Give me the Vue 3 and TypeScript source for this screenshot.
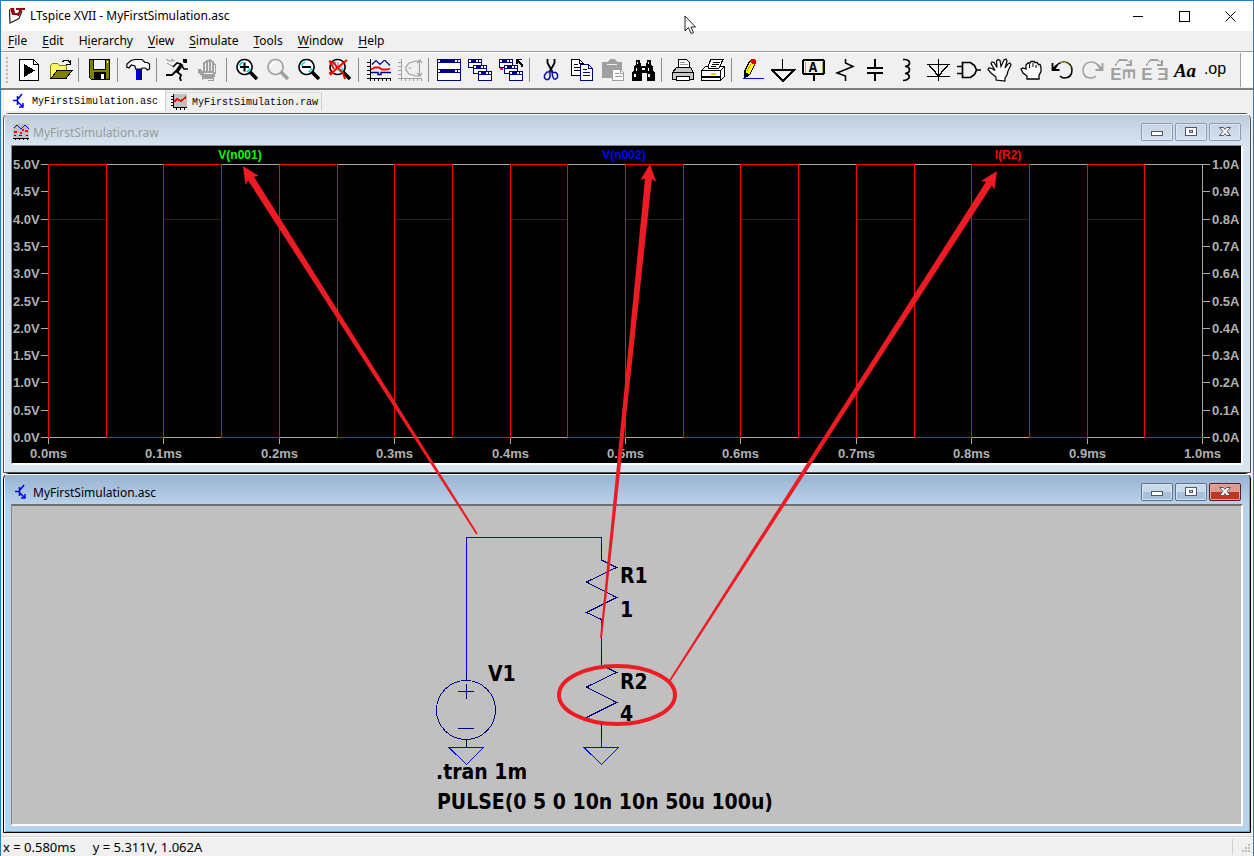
<script setup lang="ts">
interface Shape { d: string; f?: string; s?: string; w?: number }
interface Glyph { t: string; x: number; y: number; size: number; kind: string; color?: string; turn?: string }
interface Tool { name: string; shapes: Shape[]; glyphs?: Glyph[]; soft?: boolean }

const K = '#000'
const G = '#a0a0a0'
const N = '#000080'
const R = '#f00'
const W = '#fff'

const lens = (c: string): Shape[] => [
  { d: 'M15 14L22 21', s: c, w: 3.5 },
  { d: 'M9.5 1.5a7.5 7.5 0 1 0 .1 0z', f: c === K ? W : '#f0f0f0', s: c, w: 1.6 },
]
const glint: Shape = { d: 'M4.5 8C5 6 6 5 8 4M15 10c-.5 2-1.500 3-3.500 4', s: '#00e0e8', w: 1.6 }
const axes = (c: string): Shape[] => [
  { d: 'M3.5 1V21M3 20.5H24', s: c },
  { d: 'M0 4.5H3M0 8.5H3M0 12.5H3M0 16.5H3M0 20.5H3M3.5 21v2M7.5 21v2M11.5 21v2M15.5 21v2M19.5 21v2M23.5 21v2', s: c },
]
const pane = (x: number, y: number, w: number, h: number): Shape[] => [
  { d: `M${x} ${y}h${w}v${h}h-${w}z`, f: N },
  { d: `M${x + 1} ${y + 4}h${w - 2}v${h - 5}h-${w - 2}z`, f: W },
  { d: `M${x + 1} ${y + 1}h2v2h-2zM${x + w - 6} ${y + 1}h2v2h-2zM${x + w - 3} ${y + 1}h2v2h-2z`, f: W },
]
const cascade = [...pane(0, 1, 14, 9), ...pane(5, 7, 14, 9), ...pane(10, 13, 14, 10)]

const groups: Tool[][] = [
  [
    { name: 'Run', shapes: [
      { d: 'M2.5 1.5h14l5 5v16h-19z', f: W, s: K },
      { d: 'M16.5 1.5v5h5', s: K },
      { d: 'M7 6L18 12.5L7 19z', f: K },
    ] },
    { name: 'Open', shapes: [
      { d: 'M2.5 20V7.5l2-2h5l2 2h7v5h-9l-6 8z', f: '#ffff60', s: '#808000' },
      { d: 'M3 20.5l6-8h15l-6 8z', f: '#808000', s: K },
      { d: 'M14 3.5h1l1-1h4l2 2v2M18 6.5h5M22.5 2v5', s: K },
    ] },
  ],
  [{ name: 'Save', shapes: [
    { d: 'M2.5 1.5h20v20h-18l-2-2z', f: '#808000', s: K },
    { d: 'M6.5 1.5h12v10h-12z', f: '#f0f0f0', s: K },
    { d: 'M7 14h12v7H7z', f: K },
    { d: 'M14 16h3v5h-3z', f: W },
    { d: 'M20 3h1v2h-1z', f: W },
  ] }],
  [{ name: 'Control Panel', soft: true, shapes: [
    { d: 'M10 9h5v13h-5z', f: '#0000e0' },
    { d: 'M14 9h2v13h-2z', f: N },
    { d: 'M.7 9L1 6l4-3.500 4-1h7l3 3h2.500l2 1.500v5l-2 1-2-2h-3l-1 1H9.500L9 8 5.500 7 4 8.500 3 10z', f: '#fafafa', s: K, w: 1.2 },
  ] }],
  [
    { name: 'Simulate', soft: true, shapes: [
      { d: 'M1 1l3 2h4M2 5l3 2 3 1M6 1l4 2', s: '#909090' },
      { d: 'M18 1h4v4h-3l-1-1z', f: K },
      { d: 'M17 6L11.5 14', s: K, w: 3.5 },
      { d: 'M16 6l-4-1-4 4M17 8l2 3h4', s: K, w: 1.6 },
      { d: 'M11 13l-4 4H1M11 13l5 4-1 3 1 3', s: K, w: 1.8 },
    ] },
    { name: 'Halt', shapes: [
      { d: 'M6 22v-3l-4-5v-3h2l3 3V4h2l1-2h2l1-1h2l1 2h2l1 3h1v9l-2 5v3z', f: G },
      { d: 'M9.5 5v8M12.5 4v9M15.5 4v9M18.5 7v7M8 15h9M7 21h10', s: '#f0f0f0' },
    ] },
  ],
  [
    { name: 'Zoom in', soft: true, shapes: [...lens(K), glint, { d: 'M5 9h9M9.5 4.5v9', s: K, w: 2 }] },
    { name: 'Pan', soft: true, shapes: [...lens(G), { d: 'M5 9c0-2 1-4 4-4.500', s: W, w: 2 }] },
    { name: 'Zoom back', soft: true, shapes: [...lens(K), glint, { d: 'M5 9h9', s: K, w: 2 }] },
    { name: 'Zoom full extents', soft: true, shapes: [...lens(K), glint, { d: 'M7 9h7M10 4v9', s: '#808080' }, { d: 'M1 3l5 2 3 4 6 6 2 6M19 2l-5 4-6 5-6 6M1 15h5M2 4l4 7', s: R, w: 2 }] },
  ],
  [
    { name: 'Autorange', soft: true, shapes: [...axes(K),
      { d: 'M5 6.500l4-4 4 4 4-4h1l5 5', s: N, w: 1.2 },
      { d: 'M4 11.500l4-2h4l3 2h5l3-1', s: R, w: 1.8 },
      { d: 'M4 14.500h7v2h3v-2h10', s: N, w: 1.5 },
    ] },
    { name: 'FFT', soft: true, shapes: [...axes(G), { d: 'M21.5 2V18M22 3h-4l-7 2-3 4v3l3 4 7 2h4M19 5l3-3 2 3M19 15l3 3 2-3M10.500 10h3', s: G, w: 1.2 }] },
  ],
  [
    { name: 'Tile windows', shapes: [...pane(0, 1, 24, 11), ...pane(0, 11, 24, 12)] },
    { name: 'Cascade windows', shapes: cascade },
    { name: 'Close all windows', shapes: [...cascade, { d: 'M15 0h9v8h-4V5h-5z', f: '#f0f0f0' }, { d: 'M18 6V1.5h5M18 2l5 5v2', s: K, w: 1.5 }, { d: 'M1 10h3v2H1z', f: '#e000a0' }] },
  ],
  [
    { name: 'Cut', soft: true, shapes: [
      { d: 'M9.500 1v4l5 9M16.500 1v4l-5 9', s: K, w: 1.8 },
      { d: 'M12 14H9l-2.500 3v3L8 21.500h2.500L12 19zM14 13.500l1 1h3l1.500 2v3l-1.500 1.500h-2L14.500 18z', s: '#1010a0', w: 1.5 },
    ] },
    { name: 'Copy', shapes: [
      { d: 'M2.5 1.5h8l4 4v12h-12z', f: W, s: K },
      { d: 'M10.5 1.5v4h4M5 6.5h4M5 9.5h6M5 12.5h6', s: K },
      { d: 'M11.5 6.5h8l4 4v12h-12z', f: W, s: N },
      { d: 'M19.5 6.5v4h4M14 11.5h4M14 14.5h7M14 17.5h7', s: N },
    ] },
    { name: 'Paste', shapes: [
      { d: 'M2 4h5l3-3h4l3 3h5v16H2z', f: G },
      { d: 'M7 6h10', s: '#f0f0f0' },
      { d: 'M12.5 11.5h8l3 3v8h-11z', f: W, s: G },
      { d: 'M15 15.5h4M15 18.5h7M20.5 12v3h3', s: G },
    ] },
    { name: 'Find', shapes: [
      { d: 'M5 2h4v3h1v3h5V5h1V2h4v4l2 3v3l2 3v8h-8v-8h-5v8H1v-8l2-3V9l2-3z', f: K },
      { d: 'M6 4h1v2H6zM17 4h1v2h-1zM5 10h1v3H5zM17 10h1v3h-1zM3 16h2v3H3zM17 16h2v3h-2zM11 10h3v2h-3z', f: W },
    ] },
  ],
  [
    { name: 'Print setup', shapes: [
      { d: 'M8.5 9V1.5h8l3 3V9z', f: W, s: K },
      { d: 'M10 4.5h5M10 6.5h8', s: '#999' },
      { d: 'M6.5 9.5h14l3 5v7h-21v-7z', f: '#c8c8c8', s: K },
      { d: 'M3 14.5h20M6 18.5h13v4H6z', f: W, s: K },
    ] },
    { name: 'Print', shapes: [
      { d: 'M6 10L10 1.5h12L18 10z', f: W, s: K },
      { d: 'M12 4.5h7M11 6.5h7M10 8.5h5', s: K },
      { d: 'M.5 12.5l4-4h3v2h10l2-2h4v10l-4 4H.5z', f: W, s: K, w: 1.3 },
      { d: 'M.5 12.5h19v10M19.5 12.5l4-4M1 19h18', s: K, w: 1.3 },
      { d: 'M10 15h5v2h-5z', f: '#f0d000' },
    ] },
  ],
  [
    { name: 'Draw wire', shapes: [
      { d: 'M3 20.5H24', s: '#00f', w: 1.5 },
      { d: 'M5 12L10 3l5 3-5 10-4 3z', f: '#ffff00', s: K, w: 1.3 },
      { d: 'M10 2l2-1h3l1 2v2l-1 2-5-3z', f: '#e00000' },
      { d: 'M4 13l5 3-5 4z', f: K },
      { d: 'M7 13L11 6', s: '#d0a000' },
    ] },
    { name: 'Ground', shapes: [{ d: 'M11.5 1V12M0 12H23L12 23L1 12', s: K, w: 1.8 }] },
    { name: 'Label net', shapes: [
      { d: 'M2 2h19l1 1v12l-1 1H2l-1-1V3z', f: '#f0f0f0', s: K, w: 2 },
      { d: 'M3.5 4v11M20.5 4v11', s: '#b8b020' },
      { d: 'M11.5 16v7', s: K, w: 2 },
    ], glyphs: [{ t: 'A', x: 11, y: 14, size: 14, kind: 'mono' }] },
    { name: 'Resistor', soft: true, shapes: [{ d: 'M12.5 1v4L20 8.5 4 15l8.5 3v5', s: K, w: 1.5 }] },
    { name: 'Capacitor', shapes: [{ d: 'M11 1v9M11 16v7', s: K, w: 2 }, { d: 'M3 10h16M3 15h16', s: K, w: 2 }] },
    { name: 'Inductor', soft: true, shapes: [{ d: 'M8 1.5h2C16 2 16 8 10 8.5C16 8.5 16 15 10 15.5C16 15.5 16 22 8 22.5', s: K, w: 1.7 }] },
    { name: 'Diode', shapes: [{ d: 'M12.5 1V23M1 6.5H24M1 18.5H24M3 7l9.5 11L22 7', s: K, w: 1.4 }] },
    { name: 'Component', soft: true, shapes: [{ d: 'M5.5 4.5h8l4 3 2 4.500-2 4.500-4 3h-8zM0 8.500h5M0 15.500h5M19 12h5', s: K, w: 1.7 }] },
    { name: 'Move', soft: true, shapes: [
      { d: 'M8 22v-3l-5-4-3-3.500L1 10l3 .5 3 2L3 5.500 4 4l2 .5 3 5L8.500 3 10 1.500l2 1 1 6L16 2l2-1 1 2-2 7 3-4 2-1 1 2-3 6-1 4-2 3v3z', f: W, s: K, w: 1.2 },
    ] },
    { name: 'Drag', soft: true, shapes: [
      { d: 'M8 21v-3l-4-3-2-4 2-1 3 1V7l2-2h2l1-1.500h3l1 1h2l1.500 2h1.500l1 3v4l-2 4v3.500z', f: W, s: K, w: 1.3 },
      { d: 'M10.500 6v4M14 5v4M17 7v3', s: K },
    ] },
    { name: 'Undo', soft: true, shapes: [
      { d: 'M5 11C7 5 11 4 14 4c5 0 8 4 8 8 0 5-3 8-8 8-2 0-3-1-4-2', s: K, w: 1.5 },
      { d: 'M10 5c5-2 10 1 11 5', s: '#c8c020' },
      { d: 'M2.500 5v7h7M3 11l4-4', s: K, w: 1.8 },
    ] },
    { name: 'Redo', soft: true, shapes: [
      { d: 'M19 11C17 5 13 4 10 4c-5 0-8 4-8 8 0 5 3 8 8 8 2 0 4-1 5-2', s: G, w: 1.5 },
      { d: 'M21.5 5v7h-7M21 11l-4-4', s: G, w: 1.8 },
    ] },
    { name: 'Rotate', shapes: [{ d: 'M3 8l4-6h8l4 4M19 2v5h-5', s: G, w: 1.2 }], glyphs: [
      { t: 'E', x: 4, y: 22, size: 17, kind: 'heavy', color: G },
      { t: 'E', x: 17, y: 22, size: 17, kind: 'heavy', color: G, turn: 'rotate(90 17 16)' },
    ] },
    { name: 'Mirror', shapes: [{ d: 'M3 8l4-6h8l4 4M19 2v5h-5', s: G, w: 1.2 }], glyphs: [
      { t: 'E', x: 4, y: 22, size: 17, kind: 'heavy', color: G },
      { t: 'Ǝ', x: 20, y: 22, size: 17, kind: 'heavy', color: G },
    ] },
    { name: 'Text', shapes: [], glyphs: [{ t: 'Aa', x: 11, y: 19, size: 19, kind: 'script' }] },
    { name: 'SPICE directive', shapes: [], glyphs: [{ t: '.op', x: 10, y: 16, size: 16, kind: 'plain' }] },
  ],
]

const menus = ['&File', '&Edit', 'H&ierarchy', '&View', '&Simulate', '&Tools', '&Window', '&Help'].map((m) => {
  const i = m.indexOf('&')
  return { before: m.slice(0, i), key: m[i + 1], after: m.slice(i + 2) }
})

const x0 = 48.5
const x1 = 1202.5
const yTop = 164.5
const yBase = 437.5
const steps = Array.from({ length: 11 }, (_, i) => i)
const px = (i: number) => Math.round(x0 - 0.5 + (i * (x1 - x0)) / 10) + 0.5
const py = (i: number) => Math.round(yBase - 0.5 - (i * (yBase - yTop)) / 10) + 0.5
const half = (i: number) => Math.round(x0 - 0.5 + (i * (x1 - x0)) / 20) + 0.5
const wave = 'M' + half(0) + ' ' + yBase + Array.from({ length: 10 }, (_, i) =>
  `V${yTop}H${half(i * 2 + 1)}V${yBase}H${half(i * 2 + 2)}`).join('')
const faint = Array.from({ length: 10 }, (_, i) => `M${half(i * 2)} 219.5H${half(i * 2 + 1)}`).join('')

function arrow(tx: number, ty: number, hx: number, hy: number): string {
  const len = Math.hypot(hx - tx, hy - ty)
  const ux = (hx - tx) / len
  const uy = (hy - ty) / len
  const at = (along: number, side: number) =>
    `${(hx - ux * along - uy * side).toFixed(1)},${(hy - uy * along + ux * side).toFixed(1)}`
  return [at(len, 1), at(15, 3.5), at(17, 8), at(0, 0), at(17, -8), at(15, -3.5), at(len, -1)].join(' ')
}
const arrows = [arrow(477, 534, 243, 166), arrow(601, 638, 650, 164), arrow(669, 682, 997, 171)]
</script>

<template>
  <div class="app">
    <header class="titlebar">
      <svg class="smooth" viewBox="0 0 18 18" width="18" height="18" aria-hidden="true">
        <path d="M1.5 2.5L2 16 11 11.5 14 4" fill="#fff" stroke="#222" stroke-width="1.2" />
        <path d="M2 1h4l1 5h3v2H4zM8 1h9v2h-3l-3 6H9l2-6H8z" fill="#8c0c14" />
      </svg>
      <h1>LTspice XVII - MyFirstSimulation.asc</h1>
      <div class="winctl">
        <button aria-label="Minimize"><svg width="11" height="11"><path d="M0 5.5H10" /></svg></button>
        <button aria-label="Maximize"><svg width="11" height="11"><path d="M.5.5h10v10h-10z" /></svg></button>
        <button aria-label="Close"><svg class="smooth" width="11" height="11"><path d="M.5.5l10 10M10.5.5l-10 10" /></svg></button>
      </div>
    </header>

    <nav class="menubar">
      <button v-for="m in menus" :key="m.key">{{ m.before }}<u>{{ m.key }}</u>{{ m.after }}</button>
    </nav>

    <div class="toolbar" role="toolbar">
      <span class="grip"></span>
      <div v-for="(g, gi) in groups" :key="gi" class="group">
        <button v-for="t in g" :key="t.name" :aria-label="t.name">
          <svg viewBox="0 0 24 24" width="24" height="24" :class="{ smooth: t.soft }">
            <path v-for="(s, si) in t.shapes" :key="si" :d="s.d" :fill="s.f ?? 'none'" :stroke="s.s ?? 'none'" :stroke-width="s.w ?? 1" />
            <text v-for="(c, ci) in t.glyphs ?? []" :key="'t' + ci" :x="c.x" :y="c.y" :font-size="c.size" :class="c.kind" :fill="c.color ?? '#000'" :transform="c.turn" text-anchor="middle">{{ c.t }}</text>
          </svg>
        </button>
      </div>
    </div>

    <div class="tabs" role="tablist">
      <button role="tab" aria-selected="true" class="tab active">
        <svg class="smooth" viewBox="0 0 16 16" width="16" height="16"><path d="M1 7.5h4M5.5 3v9M6 6l4-5M6 9l4 4M7 14h4v-4" fill="none" stroke="#00f" stroke-width="1.5" /></svg>
        <span>MyFirstSimulation.asc</span>
      </button>
      <button role="tab" aria-selected="false" class="tab">
        <svg viewBox="0 0 16 16" width="16" height="16"><path d="M2 0h14v14H2z" fill="#c0c0c0" /><path d="M2.5 0v13.500H16M0 2.5h2M0 5.5h2M0 8.5h2M0 11.5h2M5.5 14v2M9.5 14v2M13.5 14v2" fill="none" stroke="#000" /><path d="M3 8l3-3 4 2 5-4" fill="none" stroke="red" stroke-width="2" /></svg>
        <span>MyFirstSimulation.raw</span>
      </button>
    </div>

    <main class="mdi">
      <section class="child">
        <header class="caption">
          <svg viewBox="0 0 16 16" width="16" height="16" aria-hidden="true"><path d="M0 0h16v14H0z" fill="#c0c0c0" /><path d="M1 4l3-3 4 4 4-4 4 4" fill="none" stroke="#00f" /><path d="M1 8h3M7 9h2M12 7h3M9 6h2" stroke="red" stroke-width="1.5" /><path d="M1 11.5h2M6 11.5h3M13 11.5h2" stroke="#00f" /><path d="M0 14.5h16M2.5 14v2M6.5 14v2M10.5 14v2M14.5 14v2" stroke="#000" /></svg>
          <h2>MyFirstSimulation.raw</h2>
          <div class="ctl">
            <button aria-label="Minimize plot"><svg width="14" height="14"><rect x="1.5" y="6.5" width="11" height="4" rx="1" /></svg></button>
            <button aria-label="Restore plot"><svg width="14" height="14"><rect x="1.5" y="2.5" width="11" height="8" rx="1" /><rect x="5.5" y="5.5" width="3" height="2" class="hole" /></svg></button>
            <button aria-label="Close plot"><svg class="smooth" width="14" height="14"><path d="M1.5 2.5h4L7 4.5l1.5-2h4l-3.500 4 3.500 4h-4L7 8.500l-1.500 2h-4l3.500-4z" /></svg></button>
          </div>
        </header>
        <div class="view">
          <svg class="plot" viewBox="12 146 1229 317">
            <g class="axis">
              <path :d="`M41 ${yTop}H1210M41 ${yBase}H1210M${x0} ${yTop}V444M${x1} ${yTop}V444`" />
              <path v-for="i in steps" :key="i" :d="`M41 ${py(i)}h7M1203 ${py(i)}h7M${px(i)} 438v6`" />
            </g>
            <path class="faint" :d="faint" />
            <path class="wave" :d="wave" />
            <g class="labels">
              <text v-for="i in steps" :key="'v' + i" x="13" :y="py(i) + 4">{{ (i / 2).toFixed(1) }}V</text>
              <text v-for="i in steps" :key="'a' + i" x="1212" :y="py(i) + 4">{{ (i / 10).toFixed(1) }}A</text>
              <text v-for="i in steps" :key="'t' + i" :x="px(i)" y="458" text-anchor="middle">{{ (i / 10).toFixed(1) }}ms</text>
              <text x="240" y="159" text-anchor="middle" class="green">V(n001)</text>
              <text x="624" y="159" text-anchor="middle" class="blue">V(n002)</text>
              <text x="1008" y="159" text-anchor="middle" class="red">I(R2)</text>
            </g>
          </svg>
        </div>
      </section>

      <section class="child front">
        <header class="caption">
          <svg class="smooth" viewBox="0 0 16 16" width="16" height="16" aria-hidden="true"><path d="M2 7.5h4M6.5 3v9M7 6l4-5M7 9l4 4M8 14h4v-4" fill="none" stroke="#00f" stroke-width="1.5" /></svg>
          <h2>MyFirstSimulation.asc</h2>
          <div class="ctl">
            <button aria-label="Minimize schematic"><svg width="14" height="14"><rect x="1.5" y="6.5" width="11" height="4" rx="1" /></svg></button>
            <button aria-label="Restore schematic"><svg width="14" height="14"><rect x="1.5" y="2.5" width="11" height="8" rx="1" /><rect x="5.5" y="5.5" width="3" height="2" class="hole" /></svg></button>
            <button aria-label="Close schematic" class="close"><svg class="smooth" width="14" height="14"><path d="M1.5 2.5h4L7 4.5l1.5-2h4l-3.500 4 3.500 4h-4L7 8.500l-1.500 2h-4l3.500-4z" /></svg></button>
          </div>
        </header>
        <div class="view">
          <svg class="schematic" viewBox="12 506 1229 318">
            <g class="wires">
              <path d="M466.5 673V537.5H601.5V553M601.5 633V665M601.5 730V747.5M466.5 740V747.5M449 747.5H483.500L466.5 764.500ZM584 747.5H618.500L601.5 764.500Z" />
            </g>
            <g class="parts">
              <path d="M601.5 545V560L616.500 567.5 586.5 582 616.500 597.5 586.5 612.5 601.5 619.5V635" />
              <path d="M601.5 650V665L616.500 672.5 586.5 687 616.500 702.5 586.5 717.5 601.5 724.5V740" />
              <circle cx="466" cy="710" r="29.5" />
              <path d="M466.5 673V680M466.5 740V747M458 691.5H474M466.5 684V699M458 728.5H474" />
            </g>
            <g class="notes">
              <text x="620" y="583">R1</text>
              <text x="620" y="617">1</text>
              <text x="620" y="689">R2</text>
              <text x="620" y="721">4</text>
              <text x="488" y="681">V1</text>
              <text x="436" y="779">.tran 1m</text>
              <text x="437" y="809">PULSE(0 5 0 10n 10n 50u 100u)</text>
            </g>
          </svg>
        </div>
      </section>

      <svg class="marks" viewBox="1 113 1252 723" aria-hidden="true">
        <polygon v-for="a in arrows" :key="a" :points="a" />
        <ellipse cx="617" cy="695" rx="58" ry="29" />
      </svg>
    </main>

    <footer class="status">
      <span>x = 0.580ms</span><span>y = 5.311V, 1.062A</span>
      <i class="divider"></i>
      <svg width="12" height="12" aria-hidden="true"><path d="M7 0h2v2H7zM4 3h2v2H4zM7 3h2v2H7zM1 6h2v2H1zM4 6h2v2H4zM7 6h2v2H7z" fill="#bdbdbd" /></svg>
    </footer>

    <svg class="cursor" viewBox="0 0 13 20" width="13" height="20" aria-hidden="true"><path d="M1 1V16L4.5 12.5 7 18.5 9.5 17.5 7 12H11.5Z" fill="#fff" stroke="#222" /></svg>
  </div>
</template>

<style>
html, body { margin: 0; background: #f0f0f0; }
</style>

<style scoped>
.app {
  box-sizing: border-box;
  position: relative;
  display: flex;
  flex-direction: column;
  min-height: 100vh;
  border: 1px solid #1f7fcb;
  background: #f0f0f0;
  color: #000;
  font-family: "Noto Sans", "Open Sans", sans-serif;
  font-size: 12px;
  line-height: 16px;
}
button { margin: 0; padding: 0; border: 0; background: none; color: inherit; font: inherit; }
h1, h2 { margin: 0; font-size: 12px; font-weight: 400; }
svg { display: block; shape-rendering: crispEdges; }
svg.smooth { shape-rendering: auto; }
.titlebar { display: flex; align-items: center; height: 30px; background: #fff; padding-left: 7px; }
.titlebar h1 { flex: 1; margin-left: 4px; }
.winctl { display: flex; }
.winctl button { width: 46px; height: 28px; display: grid; place-items: center; }
.winctl path { fill: none; stroke: #000; }
.menubar { display: flex; gap: 1px; height: 20px; border-bottom: 1px solid #a0a0a0; }
.menubar button { padding: 0 7px; white-space: nowrap; }
.menubar u { text-underline-offset: 2px; }
.toolbar { display: flex; align-items: center; height: 34px; border-top: 1px solid #fff; border-bottom: 2px solid #808080; padding: 0 0 1px 5px; }
.toolbar::after { content: ""; align-self: stretch; width: 12px; margin-left: auto; background: #fff; border-left: 1px solid #a0a0a0; }
.grip { width: 2px; height: 26px; margin-right: 5px; background: repeating-linear-gradient(#b8b8b8 0 2px, #f0f0f0 2px 4px); }
.group { display: flex; align-items: center; }
.group + .group::before { content: ""; width: 1px; height: 24px; margin: 0 4px 0 3px; background: #8c8c8c; }
.group button { width: 31px; height: 28px; display: grid; place-items: center; }
.group svg { overflow: visible; }
.mono { font-family: "Liberation Mono", monospace; font-weight: 700; }
.heavy { font-family: "Liberation Sans", sans-serif; font-weight: 700; }
.plain { font-family: "Liberation Sans", sans-serif; }
.script { font-family: "Liberation Serif", serif; font-weight: 700; font-style: italic; }
.tabs { display: flex; align-items: flex-end; height: 23px; padding: 0 0 2px 3px; box-sizing: border-box; }
.tab { display: flex; align-items: center; gap: 5px; height: 19px; padding: 0 3px 0 5px; font-family: "Liberation Mono", monospace; font-size: 10px; white-space: nowrap; border-top: 1px solid #d9d9d9; border-right: 1px solid #d0d0d0; }
.tab span { padding-top: 2px; }
.tab.active { gap: 4px; height: 21px; padding: 0 7px 0 8px; border-top: 0; background: #fff; }
.mdi { position: relative; flex: 1; padding: 0 2px 3px; background: #f0f0f0; border-bottom: 1px solid #d0d0d0; }
.child { border: 1px solid #505050; border-radius: 6px 6px 0 0; padding: 0 7px 7px; background: #d7e4f2; box-shadow: inset 1px 1px #fff; }
.caption { display: flex; align-items: center; height: 31px; margin: 0 -6px; padding: 4px 8px 0 8px; box-sizing: border-box; background: linear-gradient(#bfcddb, #d7e4f2); border-top: 1px solid #fff; }
.caption h2 { flex: 1; margin-left: 4px; padding-top: 2px; color: #9a9a9a; }
.ctl { display: flex; gap: 2px; }
.ctl button { box-sizing: border-box; width: 32px; height: 18px; border: 1px solid #8b9bb5; border-radius: 2px; display: grid; place-items: center; box-shadow: inset 0 0 0 1px #dce7f3; }
.ctl svg { fill: #fff; stroke: #4e5668; }
.ctl .hole { fill: #c8d6e6; }
.view { border: 1px solid #888; border-width: 1px 2px 2px 1px; border-right-color: #fff; border-bottom-color: #fff; }
.plot, .schematic { width: 100%; height: auto; }
.plot { background: #000; }
.axis path { fill: none; stroke: #a8a8a8; }
.faint { fill: none; stroke: #242424; }
.wave { fill: none; stroke: #f00; }
.labels { font-family: "Liberation Sans", sans-serif; font-size: 13px; font-weight: 700; fill: #b0b0b0; }
.labels .green { fill: #0f0; font-size: 12px; }
.labels .blue { fill: #00f; font-size: 12px; }
.labels .red { fill: #f00; font-size: 12px; }
.front { border-color: #000; background: #b9d1ea; padding-bottom: 6px; box-shadow: inset 1px 1px #fff, inset -1px -1px #30c0d8; }
.front .caption { height: 30px; background: linear-gradient(#98b3d2, #b9d1ea); }
.front .caption h2 { color: #000; }
.front .ctl button { border-color: #5c7190; background: linear-gradient(#c8d9ea 50%, #a8c0dc 50%); box-shadow: inset 0 0 0 1px #d5e3f2; }
.front .ctl .close { border-color: #5a1c20; background: linear-gradient(#dc9c90 50%, #bc3820 50%); box-shadow: inset 0 0 0 1px #e0a8a0; }
.front .view { border-top: 2px solid #707070; }
.schematic { background: #c0c0c0; }
.wires path { fill: none; stroke: #00f; }
.parts path, .parts circle { fill: none; stroke: #000080; }
.notes { font-family: "DejaVu Sans Condensed", "Noto Sans", sans-serif; font-size: 21px; font-weight: 700; }
.marks { position: absolute; inset: 0 0 auto; width: 100%; height: auto; pointer-events: none; shape-rendering: auto; }
.marks polygon { fill: #ed1c24; }
.marks ellipse { fill: none; stroke: #ed1c24; stroke-width: 4; }
.status { display: flex; align-items: center; gap: 17px; height: 18px; padding-left: 2px; border-top: 1px solid #fff; font-size: 13px; }
.divider { width: 1px; height: 16px; margin-left: auto; background: #d0d0d0; }
.status svg { margin: 6px 0 0 -9px; }
.cursor { position: absolute; left: 683px; top: 14px; shape-rendering: auto; }
</style>
